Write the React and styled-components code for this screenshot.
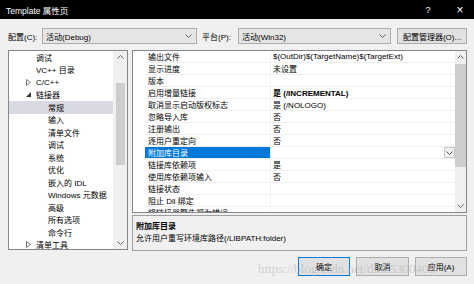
import React from "react";
import styled, { createGlobalStyle } from "styled-components";

const Global = createGlobalStyle`
  html, body {
    margin: 0;
    padding: 0;
    background: #f0f0f0;
  }
  body {
    font-family: "Liberation Sans", "Noto Sans CJK SC", sans-serif;
    font-size: 8px;
    color: #000;
  }
`;

const Window = styled.div`
  position: relative;
  width: 474px;
  height: 284px;
  overflow: hidden;
  background: #f0f0f0;
`;

const TitleBar = styled.div`
  height: 19px;
  background: #000;
  color: #fff;
  display: flex;
  align-items: center;
  padding-left: 6px;
  font-size: 8.5px;
`;

const Title = styled.div`
  flex: 1;
`;

const TitleButton = styled.div`
  width: 32px;
  text-align: center;
  font-size: ${(p) => p.size || 9}px;
  color: #fff;
  &:last-child {
    margin-right: -2px;
  }
`;

const Body = styled.div`
  padding: 8px 7px 0 8px;
`;

const ConfigRow = styled.div`
  display: flex;
  align-items: center;
  height: 18px;
`;

const Label = styled.div`
  width: ${(p) => p.w}px;
  margin-left: ${(p) => p.ml || 0}px;
  white-space: nowrap;
`;

const Combo = styled.div`
  width: ${(p) => p.w}px;
  height: 16px;
  box-sizing: border-box;
  border: 1px solid #adadad;
  background: #e5e5e5;
  display: flex;
  align-items: center;
  padding: 0 4px 0 3px;
  justify-content: space-between;
`;

const Button = styled.div`
  width: ${(p) => p.w}px;
  height: ${(p) => p.h || 16}px;
  margin-left: ${(p) => p.ml || 0}px;
  box-sizing: border-box;
  border: 1px solid ${(p) => (p.primary ? "#0078d7" : "#adadad")};
  background: #e1e1e1;
  display: flex;
  align-items: center;
  justify-content: center;
  white-space: nowrap;
`;

const Main = styled.div`
  display: flex;
  gap: 4px;
  margin-top: 5px;
  height: 201px;
`;

const Tree = styled.div`
  width: 120px;
  height: 200px;
  box-sizing: border-box;
  border: 1px solid #828790;
  background: #fff;
  display: flex;
`;

const TreeList = styled.div`
  flex: 1;
  overflow: hidden;
`;

const TreeRow = styled.div`
  height: 12.5px;
  display: flex;
  align-items: center;
  padding-left: ${(p) => 17 + (p.level - 1) * 12}px;
  background: ${(p) => (p.selected ? "#d9d9e3" : "transparent")};
  white-space: nowrap;
`;

const ArrowSlot = styled.span`
  width: 10px;
  display: flex;
  align-items: center;
`;

const ScrollBar = styled.div`
  width: ${(p) => p.w}px;
  background: #f0f0f0;
  display: flex;
  flex-direction: column;
  align-items: center;
`;

const ScrollArrow = styled.div`
  height: ${(p) => p.h}px;
  display: flex;
  align-items: center;
  justify-content: center;
`;

const Thumb = styled.div`
  width: ${(p) => p.w}px;
  background: #cdcdcd;
  margin-top: ${(p) => p.top}px;
  height: ${(p) => p.h}px;
`;

const Spacer = styled.div`
  flex: 1;
`;

const RightCol = styled.div`
  width: 335px;
  display: flex;
  flex-direction: column;
  gap: 2px;
`;

const Grid = styled.div`
  height: 163px;
  box-sizing: border-box;
  border: 1px solid #828790;
  background: #fff;
  display: flex;
`;

const Gutter = styled.div`
  width: 12px;
  background: #fff;
`;

const GridBody = styled.div`
  flex: 1;
  overflow: hidden;
`;

const GridRow = styled.div`
  display: flex;
  height: 12px;
  box-sizing: border-box;
  border-bottom: 1px solid #f0f0f0;
`;

const NameCell = styled.div`
  width: 126px;
  padding-left: 3px;
  box-sizing: border-box;
  display: flex;
  align-items: center;
  white-space: nowrap;
  overflow: hidden;
  background: ${(p) => (p.selected ? "#0078d7" : "transparent")};
  color: ${(p) => (p.selected ? "#fff" : "#000")};
  border-right: 1px solid #f0f0f0;
`;

const ValueCell = styled.div`
  flex: 1;
  padding-left: 2px;
  display: flex;
  align-items: center;
  white-space: nowrap;
  font-weight: ${(p) => (p.bold ? 700 : 400)};
`;

const DropButton = styled.div`
  width: 11px;
  height: 11px;
  margin-left: auto;
  box-sizing: border-box;
  border: 1px solid #c8c8c8;
  background: #f0f0f0;
  display: flex;
  align-items: center;
  justify-content: center;
`;

const Desc = styled.div`
  height: 36px;
  box-sizing: border-box;
  border: 1px solid #a0a0a0;
  padding: 0 3px;
  display: flex;
  flex-direction: column;
  justify-content: center;
  line-height: 12px;
`;

const DescTitle = styled.div`
  font-weight: 700;
`;

const Footer = styled.div`
  display: flex;
  justify-content: flex-end;
  gap: 6px;
  margin-top: 6px;
`;

const Watermark = styled.div`
  position: absolute;
  left: 258px;
  top: 261px;
  font-family: "Liberation Serif", serif;
  font-size: 13px;
  color: rgba(170, 170, 170, 0.5);
  white-space: nowrap;
  pointer-events: none;
`;

const Chevron = ({ up, color = "#606060" }) => (
  <svg width="7" height="4" viewBox="0 0 7 4">
    <polyline
      points={up ? "0.5,3.5 3.5,0.5 6.5,3.5" : "0.5,0.5 3.5,3.5 6.5,0.5"}
      fill="none"
      stroke={color}
      strokeWidth="1"
    />
  </svg>
);

const TreeArrow = ({ open }) =>
  open ? (
    <svg width="5" height="5" viewBox="0 0 5 5">
      <polygon points="5,0 5,5 0,5" fill="#333" />
    </svg>
  ) : (
    <svg width="5" height="7" viewBox="0 0 5 7">
      <polygon points="0.5,0.5 4.5,3.5 0.5,6.5" fill="none" stroke="#777" strokeWidth="1" />
    </svg>
  );

const treeItems = [
  { label: "调试", level: 1 },
  { label: "VC++ 目录", level: 1 },
  { label: "C/C++", level: 1, arrow: "closed" },
  { label: "链接器", level: 1, arrow: "open" },
  { label: "常规", level: 2, selected: true },
  { label: "输入", level: 2 },
  { label: "清单文件", level: 2 },
  { label: "调试", level: 2 },
  { label: "系统", level: 2 },
  { label: "优化", level: 2 },
  { label: "嵌入的 IDL", level: 2 },
  { label: "Windows 元数据", level: 2 },
  { label: "高级", level: 2 },
  { label: "所有选项", level: 2 },
  { label: "命令行", level: 2 },
  { label: "清单工具", level: 1, arrow: "closed" },
];

const properties = [
  { name: "输出文件", value: "$(OutDir)$(TargetName)$(TargetExt)" },
  { name: "显示进度", value: "未设置" },
  { name: "版本", value: "" },
  { name: "启用增量链接", value: "是 (/INCREMENTAL)", bold: true },
  { name: "取消显示启动版权标志", value: "是 (/NOLOGO)" },
  { name: "忽略导入库", value: "否" },
  { name: "注册输出", value: "否" },
  { name: "逐用户重定向", value: "否" },
  { name: "附加库目录", value: "", selected: true },
  { name: "链接库依赖项", value: "是" },
  { name: "使用库依赖项输入", value: "否" },
  { name: "链接状态", value: "" },
  { name: "阻止 Dll 绑定", value: "" },
  { name: "将链接器警告视为错误", value: "" },
];

export default function App() {
  return (
    <Window>
      <Global />
      <TitleBar>
        <Title>Template 属性页</Title>
        <TitleButton size={9}>?</TitleButton>
        <TitleButton size={12}>×</TitleButton>
      </TitleBar>
      <Body>
        <ConfigRow>
          <Label w={34}>配置(C):</Label>
          <Combo w={155}>
            <span>活动(Debug)</span>
            <Chevron />
          </Combo>
          <Label w={36} ml={5}>平台(P):</Label>
          <Combo w={153}>
            <span>活动(Win32)</span>
            <Chevron />
          </Combo>
          <Button w={70} ml={6}>配置管理器(O)...</Button>
        </ConfigRow>

        <Main>
          <Tree>
            <TreeList>
              {treeItems.map((item, i) => (
                <TreeRow key={i} level={item.level} selected={item.selected}>
                  <ArrowSlot>
                    {item.arrow && <TreeArrow open={item.arrow === "open"} />}
                  </ArrowSlot>
                  {item.label}
                </TreeRow>
              ))}
            </TreeList>
            <ScrollBar w={14}>
              <ScrollArrow h={12}>
                <Chevron up />
              </ScrollArrow>
              <Thumb w={9} top={20} h={82} />
              <Spacer />
              <ScrollArrow h={12}>
                <Chevron />
              </ScrollArrow>
            </ScrollBar>
          </Tree>

          <RightCol>
            <Grid>
              <Gutter />
              <GridBody>
                {properties.map((p, i) => (
                  <GridRow key={i}>
                    <NameCell selected={p.selected}>{p.name}</NameCell>
                    <ValueCell bold={p.bold}>
                      {p.value}
                      {p.selected && (
                        <DropButton>
                          <Chevron color="#555" />
                        </DropButton>
                      )}
                    </ValueCell>
                  </GridRow>
                ))}
              </GridBody>
              <ScrollBar w={11}>
                <ScrollArrow h={12}>
                  <Chevron up />
                </ScrollArrow>
                <Thumb w={11} top={1} h={103} />
                <Spacer />
                <ScrollArrow h={12}>
                  <Chevron />
                </ScrollArrow>
              </ScrollBar>
            </Grid>
            <Desc>
              <DescTitle>附加库目录</DescTitle>
              <div>允许用户重写环境库路径(/LIBPATH:folder)</div>
            </Desc>
          </RightCol>
        </Main>

        <Footer>
          <Button w={52} h={19} primary>确定</Button>
          <Button w={53} h={19}>取消</Button>
          <Button w={52} h={19}>应用(A)</Button>
        </Footer>
      </Body>
      <Watermark>https://blog.csdn.net/dldc5300405</Watermark>
    </Window>
  );
}
